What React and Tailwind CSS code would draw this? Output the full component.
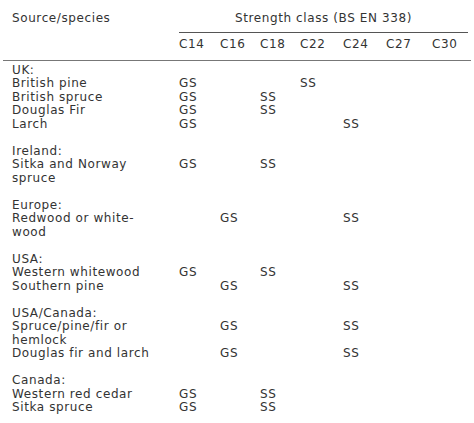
const CLASSES = ['C14', 'C16', 'C18', 'C22', 'C24', 'C27', 'C30'];

const GROUPS = [
  {
    name: 'UK:',
    rows: [
      { species: ['British pine'], grades: { C14: 'GS', C22: 'SS' } },
      { species: ['British spruce'], grades: { C14: 'GS', C18: 'SS' } },
      { species: ['Douglas Fir'], grades: { C14: 'GS', C18: 'SS' } },
      { species: ['Larch'], grades: { C14: 'GS', C24: 'SS' } },
    ],
  },
  {
    name: 'Ireland:',
    rows: [{ species: ['Sitka and Norway', 'spruce'], grades: { C14: 'GS', C18: 'SS' } }],
  },
  {
    name: 'Europe:',
    rows: [{ species: ['Redwood or white-', 'wood'], grades: { C16: 'GS', C24: 'SS' } }],
  },
  {
    name: 'USA:',
    rows: [
      { species: ['Western whitewood'], grades: { C14: 'GS', C18: 'SS' } },
      { species: ['Southern pine'], grades: { C16: 'GS', C24: 'SS' } },
    ],
  },
  {
    name: 'USA/Canada:',
    rows: [
      { species: ['Spruce/pine/fir or', 'hemlock'], grades: { C16: 'GS', C24: 'SS' } },
      { species: ['Douglas fir and larch'], grades: { C16: 'GS', C24: 'SS' } },
    ],
  },
  {
    name: 'Canada:',
    rows: [
      { species: ['Western red cedar'], grades: { C14: 'GS', C18: 'SS' } },
      { species: ['Sitka spruce'], grades: { C14: 'GS', C18: 'SS' } },
    ],
  },
];

const GRID = 'grid grid-cols-[176px_41px_40px_40px_43px_43px_46px_36px]';

const App = () => {
  return (
    <div className="w-[474px] h-[423px] bg-white px-[3px] font-['DejaVu_Sans',sans-serif] text-[12px] tracking-[0.6px] text-[#333] overflow-hidden">
      {/* Header */}
      <div className={GRID}>
        <div className="pl-[9px] pt-[11px] leading-[14px]">Source/species</div>
        <div className="col-span-7 pt-[11px] pb-[7px] leading-[14px] text-center border-b border-[#555]">
          Strength class (BS EN 338)
        </div>
      </div>
      <div className={`${GRID} border-b border-[#777]`}>
        <div />
        {CLASSES.map((c) => (
          <div key={c} className="pt-[4px] pb-[9px] leading-[14px]">{c}</div>
        ))}
        <div />
      </div>

      {/* Body */}
      <div className="pt-[2.5px] leading-[13.5px]">
        {GROUPS.map((g, gi) => (
          <div key={g.name} className={gi > 0 ? 'mt-[13.5px]' : ''}>
            <div className="pl-[9px]">{g.name}</div>
            {g.rows.map((r) => (
              <div key={r.species.join(' ')} className={GRID}>
                <div className="pl-[9px]">
                  {r.species.map((s, i) => (
                    <div key={i}>{s}</div>
                  ))}
                </div>
                {CLASSES.map((c) => (
                  <div key={c}>{r.grades[c] || ''}</div>
                ))}
              </div>
            ))}
          </div>
        ))}
      </div>
    </div>
  );
};

export default App;
